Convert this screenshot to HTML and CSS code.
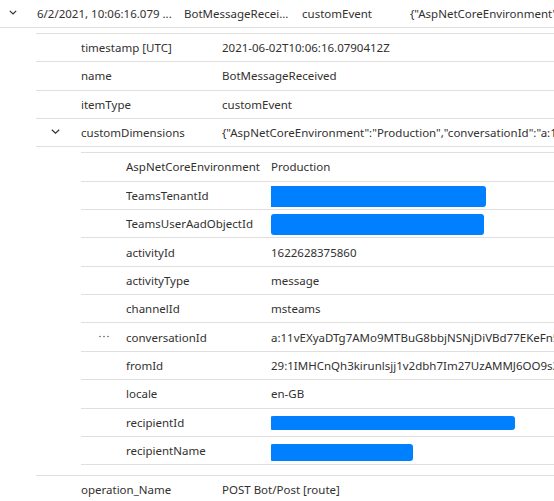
FILE: index.html
```html
<!DOCTYPE html>
<html>
<head>
<meta charset="utf-8">
<link rel="stylesheet" href="styles.css">
</head>
<body>
<div class="log">
  <div class="head">
    <div class="chev-cell"><svg class="chev" width="8" height="5" viewBox="0 0 8 5"><path d="M0.8 0.8 L4 4 L7.2 0.8" fill="none" stroke="#323130" stroke-width="1.2"/></svg></div>
    <div class="cell cell-time">6/2/2021, 10:06:16.079 ...</div>
    <div class="cell">BotMessageRecei...</div>
    <div class="cell">customEvent</div>
    <div class="cell">{"AspNetCoreEnvironment":"Production","conversationId":"a:11vEXyaDTg7AMo9MTBuG8bbjNSNjDiVBd77EKeFn5"}</div>
  </div>
  <div class="detail">
    <div class="props">
      <div class="prop"><div class="gut"></div><div class="key">timestamp [UTC]</div><div class="val">2021-06-02T10:06:16.0790412Z</div></div>
      <div class="prop"><div class="gut"></div><div class="key">name</div><div class="val">BotMessageReceived</div></div>
      <div class="prop"><div class="gut"></div><div class="key">itemType</div><div class="val">customEvent</div></div>
      <div class="group">
        <div class="prop"><div class="gut gut-chev"><svg class="chev" width="9" height="5" viewBox="0 0 9 5"><path d="M0.8 0.8 L4.5 4.2 L8.2 0.8" fill="none" stroke="#323130" stroke-width="1.2"/></svg></div><div class="key">customDimensions</div><div class="val">{"AspNetCoreEnvironment":"Production","conversationId":"a:11vEXyaDTg7AMo9MTBuG8bbjNSNjDiVBd77EKeFn5"}</div></div>
        <div class="nested">
          <div class="nprop"><div class="gut"></div><div class="key">AspNetCoreEnvironment</div><div class="val">Production</div></div>
          <div class="nprop"><div class="gut"></div><div class="key">TeamsTenantId</div><div class="val"><span class="bar bar-tenant"></span></div></div>
          <div class="nprop"><div class="gut"></div><div class="key">TeamsUserAadObjectId</div><div class="val"><span class="bar bar-user"></span></div></div>
          <div class="nprop"><div class="gut"></div><div class="key">activityId</div><div class="val">1622628375860</div></div>
          <div class="nprop"><div class="gut"></div><div class="key">activityType</div><div class="val">message</div></div>
          <div class="nprop"><div class="gut"></div><div class="key">channelId</div><div class="val">msteams</div></div>
          <div class="nprop"><div class="gut gut-dots"><svg width="10" height="3" viewBox="0 0 10 3"><circle cx="1" cy="1.5" r="0.8" fill="#605e5c"/><circle cx="5" cy="1.5" r="0.8" fill="#605e5c"/><circle cx="9" cy="1.5" r="0.8" fill="#605e5c"/></svg></div><div class="key">conversationId</div><div class="val">a:11vEXyaDTg7AMo9MTBuG8bbjNSNjDiVBd77EKeFn5Gc</div></div>
          <div class="nprop"><div class="gut"></div><div class="key">fromId</div><div class="val">29:1IMHCnQh3kirunlsjj1v2dbh7Im27UzAMMJ6OO9s3Xq</div></div>
          <div class="nprop"><div class="gut"></div><div class="key">locale</div><div class="val">en-GB</div></div>
          <div class="nprop"><div class="gut"></div><div class="key">recipientId</div><div class="val"><span class="bar bar-rid"></span></div></div>
          <div class="nprop"><div class="gut"></div><div class="key">recipientName</div><div class="val"><span class="bar bar-rname"></span></div></div>
        </div>
      </div>
      <div class="prop"><div class="gut"></div><div class="key">operation_Name</div><div class="val">POST Bot/Post [route]</div></div>
    </div>
  </div>
</div>
</body>
</html>
```
FILE: styles.css
```css
html, body {
  margin: 0;
  padding: 0;
  background: #ffffff;
}
body {
  font-family: "Noto Sans", "Open Sans", sans-serif;
  font-size: 11.5px;
  color: #323130;
  overflow: hidden;
  width: 554px;
  height: 501px;
}
.log {
  width: 554px;
}
.head {
  display: grid;
  grid-template-columns: 37px 147px 118px 108px 1fr;
  height: 28px;
  box-sizing: border-box;
  border-bottom: 1px solid #e1dfdd;
  align-items: center;
}
.cell {
  white-space: nowrap;
  overflow: hidden;
}
.cell-time {
  overflow: visible;
}
.chev-cell {
  display: flex;
  justify-content: flex-end;
  padding-right: 20px;
  padding-bottom: 3px;
}
.chev { display: block; }
.detail {
  margin-left: 36px;
  padding-top: 5px;
}
.props {
  border-top: 1px solid #e1dfdd;
}
.prop {
  display: grid;
  grid-template-columns: 45px 141px 1fr;
  height: 28.33px;
  box-sizing: border-box;
  border-bottom: 1px solid #e1dfdd;
  align-items: center;
}
.group {
  border-bottom: 1px solid #e1dfdd;
  padding-bottom: 10px;
}
.nested {
  margin-left: 45px;
  margin-top: 5px;
  border-top: 1px solid #e1dfdd;
}
.nprop {
  display: grid;
  grid-template-columns: 45px 145px 1fr;
  height: 28.36px;
  box-sizing: border-box;
  border-bottom: 1px solid #e1dfdd;
  align-items: center;
}
.key, .val {
  white-space: nowrap;
  overflow: hidden;
}
.gut-chev {
  padding-left: 15px;
  padding-bottom: 3px;
}
.gut-dots {
  padding-left: 18px;
  padding-bottom: 2px;
}
.gut svg { display: block; }
.bar {
  display: block;
  background: #0080ff;
  border-radius: 3px;
  margin-top: 2px;
}
.bar-tenant { width: 217px; height: 21px; margin-left: -2px; }
.bar-user { width: 213px; height: 21px; }
.bar-rid { width: 245px; height: 14px; margin-left: -1px; }
.bar-rname { width: 143px; height: 17px; margin-left: -1px; margin-top: 3px; }
```
